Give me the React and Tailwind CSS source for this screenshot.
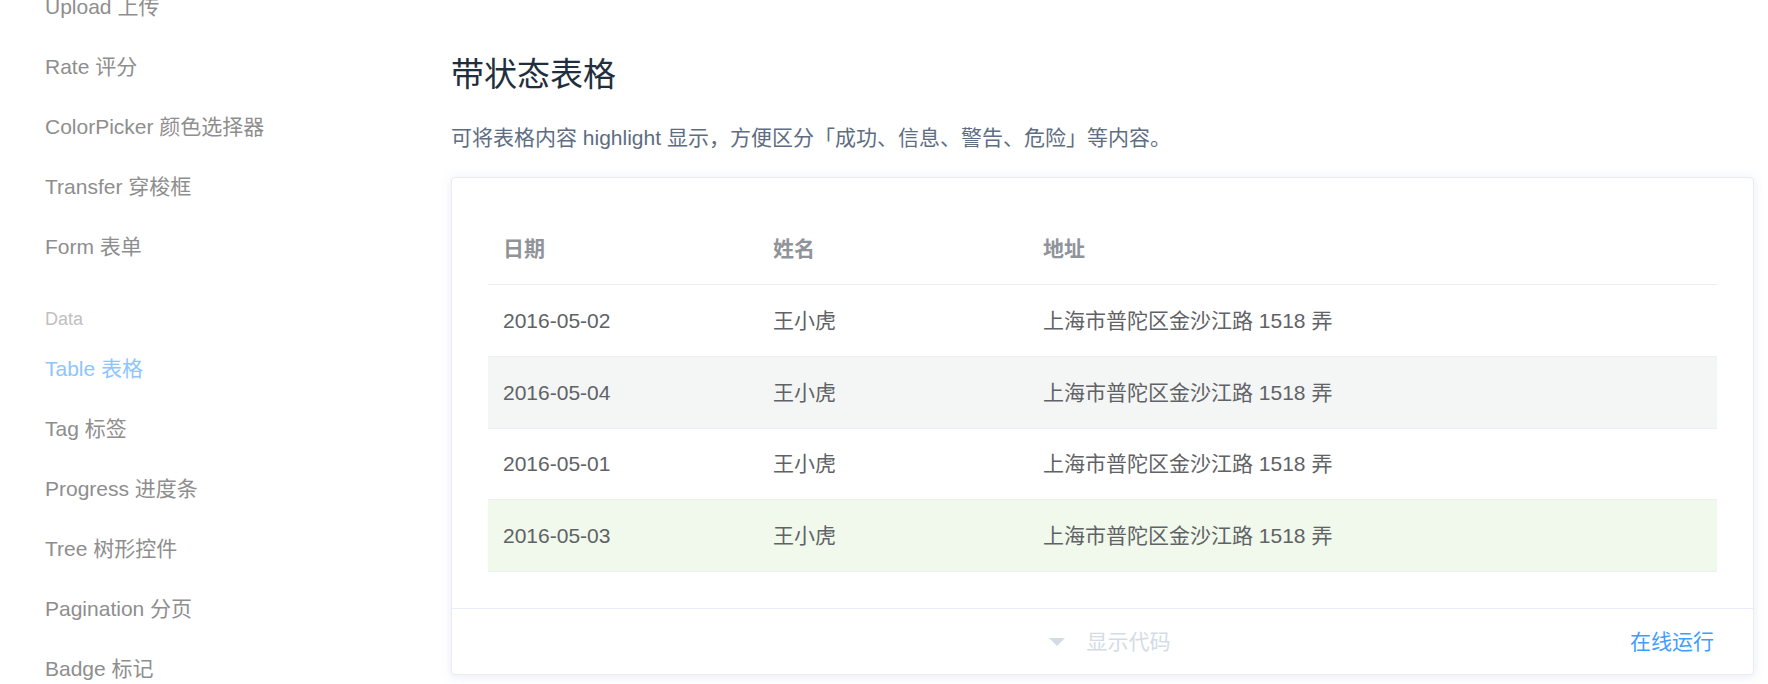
import React from "react";

const FONT = { fontFamily: '"Liberation Sans", Arial, "Noto Sans CJK SC", sans-serif' };

const navTop = ["Upload 上传", "Rate 评分", "ColorPicker 颜色选择器", "Transfer 穿梭框", "Form 表单"];
const navData = ["Table 表格", "Tag 标签", "Progress 进度条", "Tree 树形控件", "Pagination 分页", "Badge 标记"];

const rows = [
  { date: "2016-05-02", bg: "bg-white", h: "h-[72px]" },
  { date: "2016-05-04", bg: "bg-[#f4f6f5]", h: "h-[72px]" },
  { date: "2016-05-01", bg: "bg-white", h: "h-[71px]" },
  { date: "2016-05-03", bg: "bg-[#f0f9eb]", h: "h-[72px]" },
];

function Row({ date, bg, h }) {
  return (
    <div className={`flex ${h} items-center border-b border-[#ebeef5] text-[21px] text-[#606266] ${bg}`}>
      <div className="w-[270px] pl-[15px]">{date}</div>
      <div className="w-[270px] pl-[15px]">王小虎</div>
      <div className="flex-1 pl-[15px]">上海市普陀区金沙江路 1518 弄</div>
    </div>
  );
}

export default function App() {
  return (
    <div className="flex h-[684px] w-[1768px] overflow-hidden bg-white" style={FONT}>
      <aside className="w-[451px] shrink-0 pl-[45px]">
        <ul className="mt-[-23px]">
          {navTop.map((t) => (
            <li key={t} className="h-[60px] text-[21px] leading-[60px] text-[#8e8e8e] whitespace-nowrap">
              {t}
            </li>
          ))}
          <li className="mt-[23px] text-[18px] leading-[39px] text-[#c0c0c0]">Data</li>
          {navData.map((t, i) => (
            <li
              key={t}
              className={`h-[60px] text-[21px] leading-[60px] whitespace-nowrap ${i === 0 ? "text-[#8ec5fc]" : "text-[#8e8e8e]"}`}
            >
              {t}
            </li>
          ))}
        </ul>
      </aside>
      <main className="flex-1 pr-[14px] pt-[52px]">
        <h3 className="text-[33px] leading-[45px] font-normal text-[#1f2f3d]">带状态表格</h3>
        <p className="mt-[23px] text-[21px] leading-[36px] text-[#5e6d82]">
          可将表格内容 highlight 显示，方便区分「成功、信息、警告、危险」等内容。
        </p>
        <div className="mt-[21px] rounded-[4px] border border-[#ebebeb] bg-white shadow-[0_0_12px_0_rgba(232,237,250,0.6),0_3px_6px_0_rgba(232,237,250,0.5)]">
          <div className="p-[36px] pb-[36px]">
            <div className="flex h-[71px] items-center border-b border-[#ebeef5] text-[21px] font-bold text-[#909399]">
              <div className="w-[270px] pl-[15px]">日期</div>
              <div className="w-[270px] pl-[15px]">姓名</div>
              <div className="flex-1 pl-[15px]">地址</div>
            </div>
            {rows.map((r) => (
              <Row key={r.date} {...r} />
            ))}
          </div>
          <div className="relative flex h-[66px] items-center justify-center border-t border-[#eaeefb]">
            <div className="flex items-center gap-[22px] pl-[14px]">
              <svg width="16" height="9" viewBox="0 0 16 9" className="mt-[1px]">
                <polygon points="0,0 16,0 8,8" fill="#d3dce6" />
              </svg>
              <span className="text-[21px] text-[#d3dce6]">显示代码</span>
            </div>
            <span className="absolute right-[39px] top-1/2 -translate-y-1/2 text-[21px] text-[#409eff]">在线运行</span>
          </div>
        </div>
      </main>
    </div>
  );
}
